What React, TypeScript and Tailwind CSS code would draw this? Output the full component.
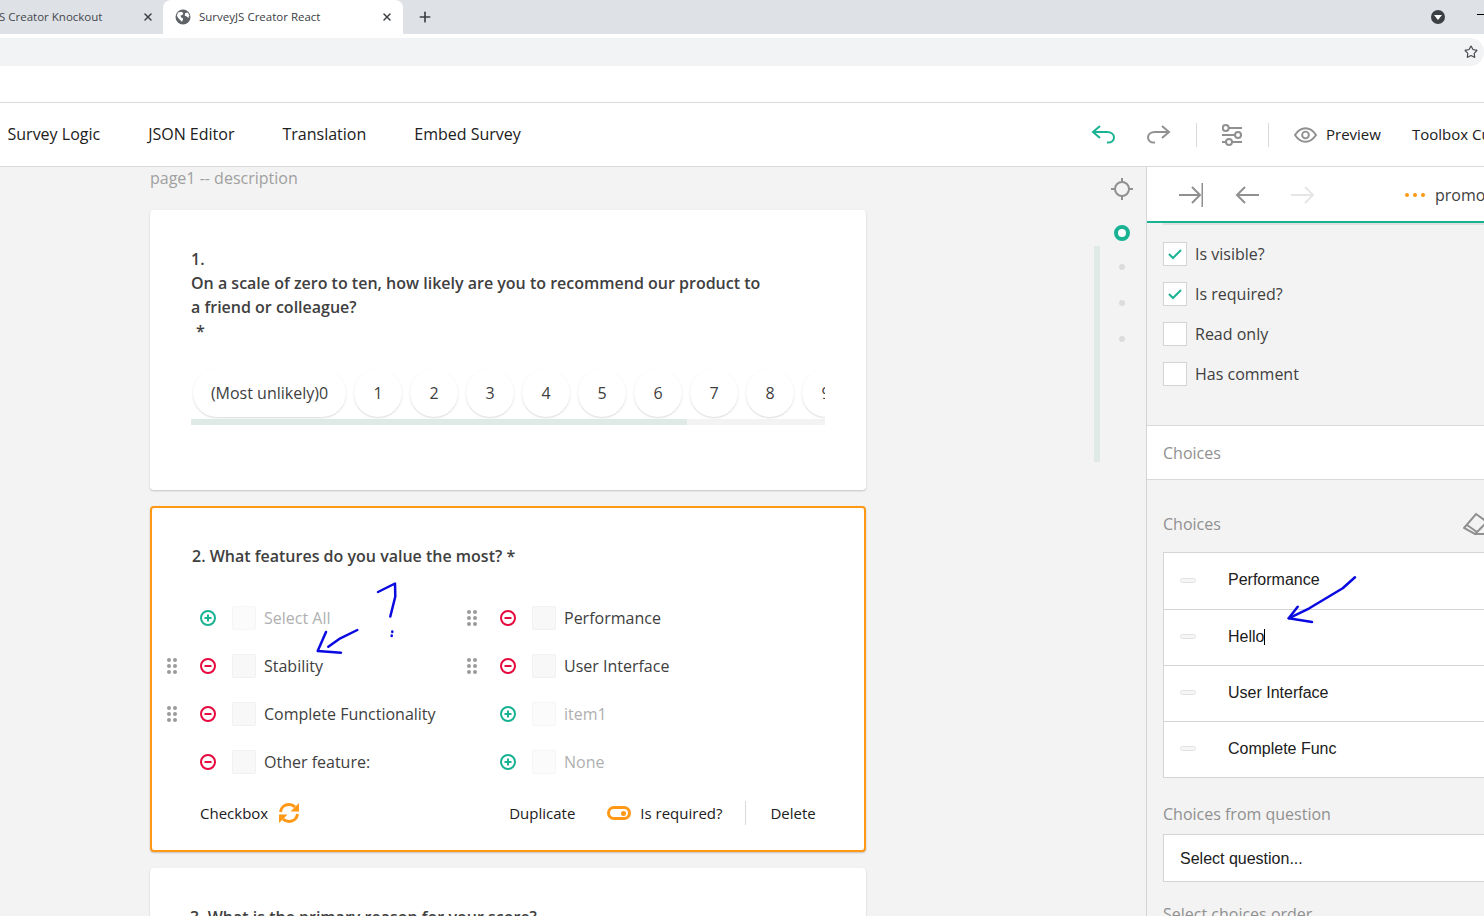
import { Star, X, Plus } from "lucide-react"

const rates = ["1", "2", "3", "4", "5", "6", "7", "8", "9"]

const choices = [
  [
    { label: "Select All", on: false, drag: false },
    { label: "Stability", on: true, drag: true },
    { label: "Complete Functionality", on: true, drag: true },
    { label: "Other feature:", on: true, drag: false },
  ],
  [
    { label: "Performance", on: true, drag: true },
    { label: "User Interface", on: true, drag: true },
    { label: "item1", on: false, drag: false },
    { label: "None", on: false, drag: false },
  ],
]

function DragDots() {
  return (
    <svg width="10" height="16" viewBox="0 0 10 16" fill="#9b9b9b">
      <circle cx="2" cy="2" r="2" />
      <circle cx="8" cy="2" r="2" />
      <circle cx="2" cy="8" r="2" />
      <circle cx="8" cy="8" r="2" />
      <circle cx="2" cy="14" r="2" />
      <circle cx="8" cy="14" r="2" />
    </svg>
  )
}

function ToggleIcon({ on }: { on: boolean }) {
  const color = on ? "#e60a3e" : "#19b394"
  return (
    <svg width="16" height="16" viewBox="0 0 16 16" fill="none" stroke={color} strokeWidth="2">
      <circle cx="8" cy="8" r="7" />
      <path d="M4.5 8h7" />
      {!on && <path d="M8 4.5v7" />}
    </svg>
  )
}

function ChoiceRow({ label, on, drag }: { label: string; on: boolean; drag: boolean }) {
  return (
    <div className="flex items-center h-12">
      <div className="w-4 flex justify-center">{drag && <DragDots />}</div>
      <div className="ml-5 w-4 flex">
        <ToggleIcon on={on} />
      </div>
      <div className={on ? "ml-4 w-6 h-6 rounded-[2px] bg-[#f8f8f8] border border-[#f1f1f1]" : "ml-4 w-6 h-6 rounded-[2px] bg-[#fbfbfb] border border-[#f6f6f6]"} />
      <span className={on ? "ml-2 text-[#404040]" : "ml-2 text-[#b0b0b0]"}>{label}</span>
    </div>
  )
}

function PanelCheck({ label, checked }: { label: string; checked?: boolean }) {
  return (
    <div className="flex items-center h-6 mb-4">
      <div className="w-6 h-6 bg-white border border-[#d4d4d4] flex items-center justify-center">
        {checked && (
          <svg width="16" height="12" viewBox="0 0 16 12" fill="none" stroke="#19b394" strokeWidth="2">
            <path d="M2 6l4 4 8-8" />
          </svg>
        )}
      </div>
      <span className="ml-2 text-[#404040]">{label}</span>
    </div>
  )
}

function ChoiceEdit({ text, caret }: { text: string; caret?: boolean }) {
  return (
    <div className="h-14 first:h-[57px] last:h-[55px] pb-[2px] flex items-center border-b border-[#d4d4d4] last:border-b-0">
      <div className="ml-4 w-4 h-[5px] rounded-full border border-[#e2e2e2] bg-[#f6f6f6]" />
      <span className="ml-8 text-[16px] text-[#202020] font-['Liberation_Sans',sans-serif]">{text}</span>
      {caret && <span className="w-px h-4 bg-black" />}
    </div>
  )
}

export default function App() {
  return (
    <div className="relative h-screen w-full overflow-hidden flex flex-col bg-white font-['Open_Sans',sans-serif] text-[16px]">
      {/* browser tabs */}
      <div className="h-[34px] flex-shrink-0 bg-[#dee1e6] flex">
        <div className="w-[163px] h-full flex items-center overflow-hidden">
          <span className="text-[11.5px] text-[#45484d] whitespace-nowrap -ml-[1px] flex-1">S Creator Knockout</span>
          <X className="h-3 w-3 mr-[9px] text-[#3c4043]" strokeWidth={3} />
        </div>
        <div className="w-[240px] h-[38px] bg-white rounded-t-lg flex items-center pl-3 pb-1">
          <svg width="16" height="16" viewBox="0 0 16 16" className="flex-shrink-0">
            <circle cx="8" cy="8" r="7.5" fill="#5f6368" />
            <path d="M3 3.5l3.5-.8 1.800 1.300-.8 2-2 .4.6 2.200 1.600.3.4 1.600-1.200 2.200L3.600 9.500 1.800 6.800z" fill="#fff" />
            <path d="M10 4.200l2.800-.6 1.600 3-1.200 2.400-1.400-1.600-2-.6z" fill="#fff" />
          </svg>
          <span className="ml-2 flex-1 text-[11.5px] text-[#3c4043] whitespace-nowrap">SurveyJS Creator React</span>
          <X className="h-3 w-3 mr-[10px] text-[#3c4043]" strokeWidth={3} />
        </div>
        <Plus className="ml-[14px] mt-[9px] h-4 w-4 text-[#3c4043]" strokeWidth={2.5} />
        <div className="ml-auto flex items-center">
          <div className="w-[14px] h-[14px] rounded-full bg-[#3c4043] flex items-center justify-center mr-[32px]">
            <div className="w-0 h-0 border-l-[4px] border-r-[4px] border-t-[5px] border-l-transparent border-r-transparent border-t-white" />
          </div>
          <div className="w-[7px] h-px bg-black mb-[6px]" />
        </div>
      </div>

      {/* address bar */}
      <div className="h-[32px] flex-shrink-0 bg-white pt-1">
        <div className="h-[28px] bg-[#f1f3f4] rounded-r-[14px] flex items-center justify-end pr-[6px]">
          <Star className="h-[14px] w-[14px] text-[#45484d]" strokeWidth={2} />
        </div>
      </div>

      <div className="h-[37px] flex-shrink-0 bg-white border-b border-[#d9d9d9]" />

      {/* creator toolbar */}
      <div className="h-[64px] flex-shrink-0 bg-white border-b border-[#d9d9d9] flex items-center text-[#202020] whitespace-nowrap">
        <nav className="flex gap-12 pl-[7.5px] -mt-[1px]">
          <span>Survey Logic</span>
          <span>JSON Editor</span>
          <span>Translation</span>
          <span>Embed Survey</span>
        </nav>
        <div className="ml-auto w-[393px] flex-shrink-0 flex items-center overflow-hidden">
          <svg width="24" height="20" viewBox="0 0 24 20" fill="none" stroke="#19b394" strokeWidth="2" className="flex-shrink-0">
            <path d="M9 1L2 7l7 6" />
            <path d="M2 7h14c4 0 7 2 7 5.500S20 18 16 17.500" />
          </svg>
          <svg width="24" height="20" viewBox="0 0 24 20" fill="none" stroke="#909090" strokeWidth="2" className="ml-8 flex-shrink-0">
            <path d="M15 1l7 6-7 6" />
            <path d="M22 7H8c-4 0-7 2-7 5.500S4 18 8 17.500" />
          </svg>
          <div className="ml-[25px] w-px h-6 bg-[#d9d9d9] flex-shrink-0" />
          <svg width="20" height="22" viewBox="0 0 20 22" fill="none" stroke="#909090" strokeWidth="2" className="ml-[25px] flex-shrink-0">
            <path d="M7 4h13M0 11h13M19 11h1M0 18h4M10 18h10" />
            <circle cx="3.700" cy="4" r="3" />
            <circle cx="16" cy="11" r="3" />
            <circle cx="7" cy="18" r="3" />
          </svg>
          <div className="ml-[26px] w-px h-6 bg-[#d9d9d9] flex-shrink-0" />
          <svg width="23" height="16" viewBox="0 0 24 16" fill="none" stroke="#909090" strokeWidth="2" className="ml-[25px] flex-shrink-0">
            <path d="M1 8c3-4.500 6.500-7 11-7s8 2.500 11 7c-3 4.500-6.500 7-11 7S4 12.500 1 8z" />
            <circle cx="12" cy="8" r="3.500" />
          </svg>
          <span className="ml-[9px] text-[15px]">Preview</span>
          <span className="ml-[31px] text-[15px]">Toolbox Customization</span>
        </div>
      </div>

      <div className="flex-1 flex min-h-0 bg-[#f3f3f3]">
        {/* design surface */}
        <div className="w-[1146px] flex-shrink-0 flex overflow-hidden pl-[150px]">
          <div className="w-[716px] flex-shrink-0">
            <p className="h-[43px] leading-[22px] text-[#a0a0a0]">page1 -- description</p>

            <div className="h-[280px] bg-white rounded-[4px] shadow-[0_1px_2px_rgba(0,0,0,0.2)] pt-[37px] pl-[41px] mb-4">
              <div className="w-[575px] font-semibold leading-6 text-[#404040]">
                <p>1.</p>
                <p>On a scale of zero to ten, how likely are you to recommend our product to a friend or colleague?</p>
                <p className="pl-[5px]">*</p>
              </div>
              <div className="w-[634px] mt-[26px] overflow-hidden">
                <div className="flex gap-2 pl-[2px] h-[50px] text-[#404040]">
                  <div className="flex-shrink-0 w-[153px] h-12 rounded-3xl bg-white shadow-[0_1px_2px_rgba(0,0,0,0.15)] flex items-center justify-center">(Most unlikely)0</div>
                  {rates.map((r) => (
                    <div key={r} className="flex-shrink-0 w-12 h-12 rounded-full bg-white shadow-[0_1px_2px_rgba(0,0,0,0.15)] flex items-center justify-center">{r}</div>
                  ))}
                </div>
                <div className="h-[6px] bg-[#f3f3f3]">
                  <div className="w-[496px] h-full bg-[#dfeae7]" />
                </div>
              </div>
            </div>

            <div className="h-[346px] bg-white rounded-[4px] border-2 border-[#ff9814] shadow-[0_1px_2px_rgba(0,0,0,0.2)] mb-4 pt-[36px]">
              <p className="pl-10 font-semibold leading-6 text-[#404040]">2. What features do you value the most? *</p>
              <div className="mt-[26px] pl-3 flex">
                {choices.map((col, i) => (
                  <div key={i} className="w-[300px]">
                    {col.map((c) => <ChoiceRow key={c.label} {...c} />)}
                  </div>
                ))}
              </div>
              <div className="mt-[15px] flex items-center pl-12 h-6 text-[#202020]">
                <span className="text-[15px]">Checkbox</span>
                <svg width="22" height="22" viewBox="0 0 22 22" className="ml-[10px]">
                  <g fill="none" stroke="#ff9814" strokeWidth="3">
                    <path d="M2.500 10C3 5.500 6.500 2.500 11 2.500c2.500 0 4.500 1 6 2.500" />
                    <path d="M19.500 12c-.5 4.500-4 7.500-8.500 7.500-2.500 0-4.500-1-6-2.500" />
                  </g>
                  <path d="M21 1v8.500h-8.500zM1 21v-8.500h8.500z" fill="#ff9814" />
                </svg>
                <span className="ml-[209px] text-[15px]">Duplicate</span>
                <div className="ml-[32px] w-6 h-[14px] rounded-full border-[3px] border-[#ff9814] flex items-center justify-end pr-[2px]">
                  <div className="w-[5px] h-[5px] rounded-full bg-[#ff9814]" />
                </div>
                <span className="ml-[9px] text-[15px]">Is required?</span>
                <div className="ml-[23px] w-px h-6 bg-[#d9d9d9]" />
                <span className="ml-[24px] text-[15px]">Delete</span>
              </div>
            </div>

            <div className="h-[100px] bg-white rounded-[4px] shadow-[0_1px_2px_rgba(0,0,0,0.2)] pt-[37px] pl-10 font-semibold text-[#404040]">
              3. What is the primary reason for your score?
            </div>
          </div>

          {/* page navigator */}
          <div className="ml-[228px] mt-[79px] w-[6px] h-[216px] flex-shrink-0 bg-[#dfeae7]" />
          <div className="ml-1 w-9 flex-shrink-0 flex flex-col items-center">
            <svg width="24" height="24" viewBox="0 0 24 24" fill="none" stroke="#909090" strokeWidth="2" className="mt-[10px]">
              <circle cx="12" cy="12" r="7" />
              <path d="M12 1v4M12 19v4M1 12h4M19 12h4" />
            </svg>
            <div className="mt-6 w-4 h-4 rounded-full border-[4px] border-[#19b394] bg-white" />
            <div className="mt-[23px] w-[6px] h-[6px] rounded-full bg-[#dcdcdc]" />
            <div className="mt-[30px] w-[6px] h-[6px] rounded-full bg-[#dcdcdc]" />
            <div className="mt-[30px] w-[6px] h-[6px] rounded-full bg-[#dcdcdc]" />
          </div>
        </div>

        {/* property grid */}
        <aside className="flex-1 min-w-0 bg-[#f3f3f3] border-l border-[#d4d4d4] overflow-hidden whitespace-nowrap">
          <div className="h-[56px] bg-white border-b-2 border-[#19b394] flex items-center pl-[32px] pt-[2px]">
            <svg width="24" height="24" viewBox="0 0 24 24" fill="none" stroke="#909090" strokeWidth="2" className="flex-shrink-0">
              <path d="M0 12h21M13 4l8 8-8 8" />
              <path d="M23.500 0v24" />
            </svg>
            <svg width="24" height="24" viewBox="0 0 24 24" fill="none" stroke="#909090" strokeWidth="2" className="ml-8 flex-shrink-0">
              <path d="M24 12H2M10 4l-8 8 8 8" />
            </svg>
            <svg width="24" height="24" viewBox="0 0 24 24" fill="none" stroke="#e6e6e6" strokeWidth="2" className="ml-8 flex-shrink-0">
              <path d="M0 12h22M14 4l8 8-8 8" />
            </svg>
            <div className="ml-[90px] flex gap-[4px] flex-shrink-0">
              <span className="w-1 h-1 rounded-full bg-[#ff9814]" />
              <span className="w-1 h-1 rounded-full bg-[#ff9814]" />
              <span className="w-1 h-1 rounded-full bg-[#ff9814]" />
            </div>
            <span className="ml-[10px] text-[#404040]">promoter_score</span>
          </div>
          <div className="ml-4 h-[2px] bg-[#e0e0e0]" />

          <div className="pl-4 pt-[17px] h-[200px]">
            <PanelCheck label="Is visible?" checked />
            <PanelCheck label="Is required?" checked />
            <PanelCheck label="Read only" />
            <PanelCheck label="Has comment" />
          </div>

          <div className="h-[55px] bg-white border-y border-[#d9d9d9] flex items-center pl-4 text-[#909090]">Choices</div>

          <div className="pl-4">
            <div className="h-[72px] pt-4 flex items-center justify-between text-[#909090]">
              <span>Choices</span>
              <svg width="28" height="24" viewBox="0 0 28 24" fill="none" stroke="#909090" strokeWidth="2" className="-mr-[7px] flex-shrink-0">
                <path d="M1 16L13 2l11 8-12 12z" />
                <path d="M4 13l10 7M12 22h14" />
              </svg>
            </div>
            <div className="bg-white border border-[#d4d4d4] border-r-0">
              <ChoiceEdit text="Performance" />
              <ChoiceEdit text="Hello" caret />
              <ChoiceEdit text="User Interface" />
              <ChoiceEdit text="Complete Func" />
            </div>
            <p className="mt-[24px] h-[32px] leading-6 text-[#909090]">Choices from question</p>
            <div className="h-12 bg-white border border-[#d4d4d4] border-r-0 flex items-center pl-4 pt-[2px] font-['Liberation_Sans',sans-serif] text-[#202020]">Select question...</div>
            <p className="mt-[20px] leading-6 text-[#909090]">Select choices order</p>
          </div>
        </aside>
      </div>

      {/* pen annotations on top of the screenshot */}
      <svg className="absolute inset-0 pointer-events-none" width="1484" height="916" viewBox="0 0 1484 916" fill="none" stroke="#0a0ae0" strokeWidth="2.500" strokeLinecap="round" strokeLinejoin="round">
        <path d="M378 592l17-8.500.3 13-5 20" />
        <path d="M392.300 631.500v.5M391.700 635.500v.5" />
        <path d="M357.300 630l-17 8.300-12 8.400" />
        <path d="M326 632l-8.300 19 23.300 1.700" />
        <path d="M1355 577.300l-12.300 11-16.700 10-16.700 10-20.600 10" />
        <path d="M1297.700 606.700l-9 11.600 23.300 3.700" />
      </svg>
    </div>
  )
}
